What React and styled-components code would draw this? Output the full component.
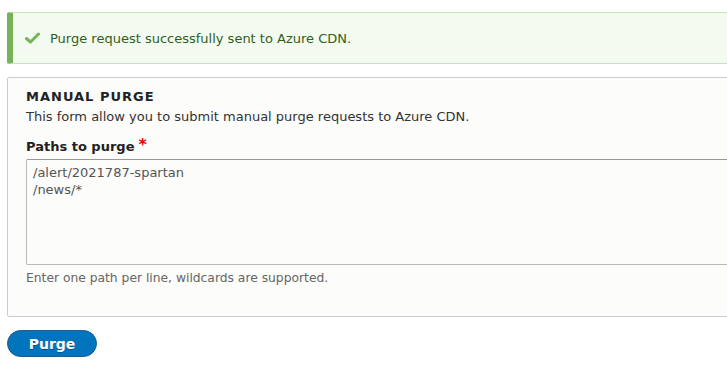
import React from 'react';
import styled, { createGlobalStyle } from 'styled-components';

const GlobalStyle = createGlobalStyle`
  html, body {
    margin: 0;
    padding: 0;
    background: #ffffff;
    overflow: hidden;
  }
  body {
    font-family: "DejaVu Sans", "Liberation Sans", sans-serif;
    color: #333;
  }
`;

const Page = styled.div`
  width: 1000px;
  padding: 12px 0 0 7px;
`;

const Message = styled.div`
  display: flex;
  align-items: center;
  box-sizing: border-box;
  height: 52px;
  padding-left: 12px;
  background: #f3faef;
  border: 1px solid #c9e1bd;
  border-left: 6px solid #77b259;
  border-radius: 2px;
  color: #325e1c;
  font-size: 13px;
  margin-bottom: 13px;
`;

const CheckIcon = styled.svg`
  width: 15px;
  height: 12px;
  margin-right: 10px;
  flex-shrink: 0;
`;

const Fieldset = styled.section`
  box-sizing: border-box;
  background: #fcfcfa;
  border: 1px solid #ccc;
  border-radius: 2px;
  padding: 11px 18px 30px;
`;

const Title = styled.h2`
  margin: 0;
  font-size: 13px;
  line-height: 16px;
  font-weight: bold;
  letter-spacing: 1px;
  text-transform: uppercase;
  color: #222;
`;

const Intro = styled.p`
  margin: 4px 0 0;
  font-size: 13px;
  line-height: 16px;
  color: #333;
`;

const Label = styled.label`
  display: block;
  margin: 14px 0 4px;
  font-size: 13px;
  line-height: 16px;
  font-weight: bold;
  color: #222;
`;

const Required = styled.span`
  color: #e00;
  font-size: 16px;
  line-height: 10px;
  margin-left: 4px;
  position: relative;
  top: -1px;
`;

const Textarea = styled.textarea`
  display: block;
  box-sizing: border-box;
  width: 100%;
  height: 106px;
  margin: 0;
  padding: 4px 6px;
  background: #fcfcfa;
  border: 1px solid #b8b8b8;
  border-top-color: #999;
  border-radius: 2px;
  font-family: "DejaVu Sans", "Liberation Sans", sans-serif;
  font-size: 13px;
  line-height: 17px;
  color: #555;
  resize: none;
  outline: none;
`;

const Help = styled.div`
  margin-top: 5px;
  font-size: 12.3px;
  line-height: 16px;
  color: #666;
`;

const Button = styled.button`
  box-sizing: border-box;
  margin-top: 13px;
  width: 90px;
  height: 27px;
  padding: 0;
  background: #0074bd;
  border: 1px solid #1e5c90;
  border-radius: 20px;
  color: #fff;
  font-family: "DejaVu Sans", "Liberation Sans", sans-serif;
  font-size: 14px;
  font-weight: bold;
  text-shadow: 0 1px 0 rgba(0, 0, 0, 0.3);
  cursor: pointer;
`;

const App = () => (
  <>
    <GlobalStyle />
    <Page>
      <Message>
        <CheckIcon viewBox="0 0 15 12">
          <path d="M1.5 6.5 L5.5 10 L13.5 2" fill="none" stroke="#77b259" strokeWidth="3" strokeLinecap="round" strokeLinejoin="round" />
        </CheckIcon>
        Purge request successfully sent to Azure CDN.
      </Message>
      <Fieldset>
        <Title>Manual purge</Title>
        <Intro>This form allow you to submit manual purge requests to Azure CDN.</Intro>
        <Label htmlFor="paths">
          Paths to purge<Required>*</Required>
        </Label>
        <Textarea id="paths" defaultValue={'/alert/2021787-spartan\n/news/*'} />
        <Help>Enter one path per line, wildcards are supported.</Help>
      </Fieldset>
      <Button type="button">Purge</Button>
    </Page>
  </>
);

export default App;
